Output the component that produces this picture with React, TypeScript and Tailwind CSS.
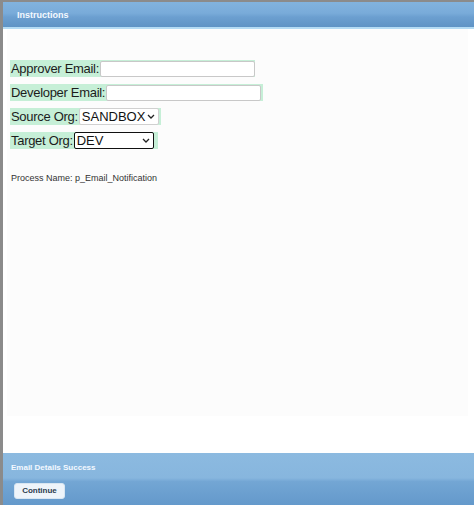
import { useState } from "react";

function Chevron() {
  return (
    <svg
      width="8"
      height="5"
      viewBox="0 0 8 5"
      className="pointer-events-none absolute right-[4px] top-[7px]"
    >
      <path d="M1 1l3 3 3-3" fill="none" stroke="#222" strokeWidth="1.3" />
    </svg>
  );
}

export default function App() {
  const [approver, setApprover] = useState("");
  const [developer, setDeveloper] = useState("");
  const [source, setSource] = useState("SANDBOX");
  const [target, setTarget] = useState("DEV");

  return (
    <div className="w-[474px] h-[505px] flex flex-col bg-white border-l-[3px] border-t-2 border-[#8b8b8b] font-['Liberation_Sans',Arial,sans-serif]">
      {/* Header */}
      <div className="h-[27px] shrink-0 flex items-center pl-[14px] pt-[2px] bg-[linear-gradient(to_bottom,#82b3de_0%,#79abd9_45%,#6c9fd0_60%,#5f93c5_100%)] border-b-2 border-[#b4dbf4]">
        <span className="text-[9px] font-bold text-[#f4f9ff]">Instructions</span>
      </div>

      {/* Content */}
      <div className="flex-1 flex flex-col">
        <div className="ml-[4px] w-[461px] h-[387px] bg-[#fcfcfc] pt-[31px] pl-[3px] text-[#1c1c1c]">
          <div className="flex flex-col items-start gap-[7px]">
            <label className="inline-flex items-center h-[17px] bg-[#c6efd7] pl-[1px] text-[13px] tracking-[-0.3px]">
              Approver Email:
              <input
                value={approver}
                onChange={(e) => setApprover(e.target.value)}
                className="ml-[1px] w-[155px] h-[16px] bg-white border border-[#c8c8c8] rounded-[2px] outline-none"
              />
            </label>
            <label className="inline-flex items-center h-[17px] bg-[#c6efd7] pl-[1px] pr-[2px] text-[13px] tracking-[-0.3px]">
              Developer Email:
              <input
                value={developer}
                onChange={(e) => setDeveloper(e.target.value)}
                className="ml-[1px] w-[155px] h-[16px] bg-white border border-[#c8c8c8] rounded-[2px] outline-none"
              />
            </label>
            <label className="inline-flex items-center h-[17px] bg-[#c6efd7] pl-[1px] pr-[2px] text-[13px] tracking-[-0.3px]">
              Source Org:
              <span className="relative ml-[1px]">
                <select
                  value={source}
                  onChange={(e) => setSource(e.target.value)}
                  className="appearance-none w-[80px] h-[17px] bg-white border border-[#d0d0d0] rounded-[2px] pl-[2px] text-[13px] leading-[15px] tracking-normal text-[#111] outline-none"
                >
                  <option>SANDBOX</option>
                  <option>DEV</option>
                </select>
                <Chevron />
              </span>
            </label>
            <label className="inline-flex items-center h-[17px] bg-[#c6efd7] pl-[1px] pr-[4px] text-[13px] tracking-[-0.3px]">
              Target Org:
              <span className="relative ml-[1px]">
                <select
                  value={target}
                  onChange={(e) => setTarget(e.target.value)}
                  className="appearance-none w-[80px] h-[17px] bg-white border-[1.5px] border-[#111] rounded-[2px] pl-[2px] text-[13px] leading-[14px] tracking-normal text-[#111] outline-none"
                >
                  <option>DEV</option>
                  <option>SANDBOX</option>
                </select>
                <Chevron />
              </span>
            </label>
          </div>

          <p className="mt-[23px] ml-[1px] text-[9px] text-[#333]">
            Process Name: p_Email_Notification
          </p>
        </div>
      </div>

      {/* Footer */}
      <div className="h-[52px] shrink-0 flex flex-col pl-[8px] bg-[linear-gradient(to_bottom,#8cbae0_0%,#87b6de_48%,#73a6d4_55%,#6499cb_100%)]">
        <span className="mt-[9px] text-[8px] font-bold text-[#f4f9ff]">
          Email Details Success
        </span>
        <button
          type="button"
          className="mt-[9px] ml-[3px] w-[51px] h-[16px] rounded-[3px] bg-[#eef4fa] border border-[#d8e6f2] text-[8px] font-bold text-[#2b3b4e]"
        >
          Continue
        </button>
      </div>
    </div>
  );
}
